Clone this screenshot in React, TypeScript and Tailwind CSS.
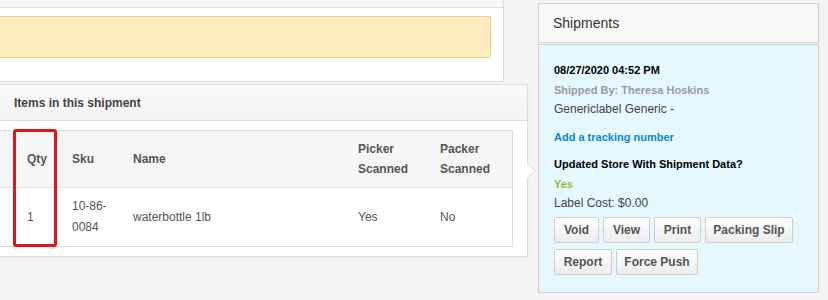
import React from "react";

const items = [
  { qty: "1", sku: "10-86-0084", name: "waterbottle 1lb", picker: "Yes", packer: "No" },
];

const buttonRows = [
  [
    { label: "Void", w: "w-[45px]" },
    { label: "View", w: "w-[47px]" },
    { label: "Print", w: "w-[47px]" },
    { label: "Packing Slip", w: "w-[88px]" },
  ],
  [
    { label: "Report", w: "w-[58px]" },
    { label: "Force Push", w: "w-[82px]" },
  ],
];

export default function App() {
  return (
    <div className="flex h-[300px] w-[828px] overflow-hidden bg-[#f4f4f4] font-['Liberation_Sans',Arial,sans-serif]">
      {/* left column */}
      <div className="flex w-[528px] flex-col">
        <div className="w-[504px] border-r border-b border-[#dcdcdc] bg-white">
          <div className="h-[8px] border-b border-[#dedede] bg-[#f7f7f7]" />
          <div className="pt-[8px] pr-[12px] pb-[23px]">
            <div className="h-[42px] border border-l-0 border-[#ecd48a] bg-[#feecbe]" />
          </div>
        </div>

        <div className="relative mt-[2px] w-[528px] border-t border-r border-b border-[#dcdcdc] bg-white shadow-[0_1px_2px_rgba(0,0,0,0.06)]">
          <div className="flex h-[36px] items-center border-b border-[#dedede] bg-gradient-to-b from-[#fbfbfb] to-[#f3f3f3] pl-[14px] text-[12px] font-bold text-[#444]">
            Items in this shipment
          </div>
          <div className="pt-[9px] pr-[14px] pb-[9px]">
            <div className="relative border border-l-0 border-[#dcdcdc] text-[12px] leading-[20px] text-[#555]">
              <div className="grid grid-cols-[58px_61px_225px_82px_1fr] border-b border-[#e2e2e2] bg-[#f6f6f6] py-[8px] font-bold">
                <div className="flex items-center pl-[27px]">Qty</div>
                <div className="flex items-center pl-[14px]">Sku</div>
                <div className="flex items-center pl-[14px]">Name</div>
                <div className="pl-[14px]">Picker<br />Scanned</div>
                <div className="pl-[14px]">Packer<br />Scanned</div>
              </div>
              {items.map((it) => (
                <div key={it.sku} className="grid grid-cols-[58px_61px_225px_82px_1fr] bg-white py-[8px] leading-[21px]">
                  <div className="flex items-center pl-[27px]">{it.qty}</div>
                  <div className="pl-[14px] pr-[4px] break-words">
                    10-86-<br />0084
                  </div>
                  <div className="flex items-center pl-[14px]">{it.name}</div>
                  <div className="flex items-center pl-[14px]">{it.picker}</div>
                  <div className="flex items-center pl-[14px]">{it.packer}</div>
                </div>
              ))}
              <div className="absolute top-[-2px] left-[13px] h-[118px] w-[44px] rounded-[3px] border-[3px] border-[#e3141b]" />
            </div>
          </div>
          {/* pointer toward the shipments panel */}
          <svg className="absolute top-[78px] right-[-9px]" width="9" height="16" viewBox="0 0 9 16">
            <path d="M0 0 L8 8 L0 16 Z" fill="#ffffff" />
            <path d="M0 0.5 L8 8 L0 15.5" fill="none" stroke="#dcdcdc" strokeWidth="1" />
          </svg>
        </div>
      </div>

      {/* right column */}
      <div className="mt-[3px] ml-[10px] flex w-[281px] flex-col">
        <div className="flex h-[40px] items-center border border-[#cfcfcf] bg-[#f8f8f8] pl-[14px] text-[14px] text-[#333]">
          Shipments
        </div>
        <div className="mt-[1px] border border-[#cfcfcf] bg-[#e5f8fd] px-[15px] pt-[15px] pb-[17px] text-[11px]">
          <div className="leading-[20px] font-bold text-black">08/27/2020 04:52 PM</div>
          <div className="leading-[20px] font-bold text-[#9a9a9a]">Shipped By: Theresa Hoskins</div>
          <div className="text-[12px] leading-[19px] text-[#444]">Genericlabel Generic -</div>
          <div className="mt-[8px] leading-[20px] font-bold text-[#0a87d4]">Add a tracking number</div>
          <div className="mt-[7px] leading-[20px] font-bold text-black">Updated Store With Shipment Data?</div>
          <div className="leading-[20px] font-bold text-[#83c13b]">Yes</div>
          <div className="text-[12px] leading-[19px] text-[#444]">Label Cost: $0.00</div>
          <div className="mt-[4px] flex flex-col gap-[6px]">
            {buttonRows.map((row, i) => (
              <div key={i} className="flex gap-[4px]">
                {row.map((b) => (
                  <button
                    key={b.label}
                    className={`${b.w} h-[26px] rounded-[2px] border border-[#cccccc] bg-gradient-to-b from-[#ffffff] to-[#ececec] text-[12px] font-bold text-[#555]`}
                  >
                    {b.label}
                  </button>
                ))}
              </div>
            ))}
          </div>
        </div>
      </div>
    </div>
  );
}
